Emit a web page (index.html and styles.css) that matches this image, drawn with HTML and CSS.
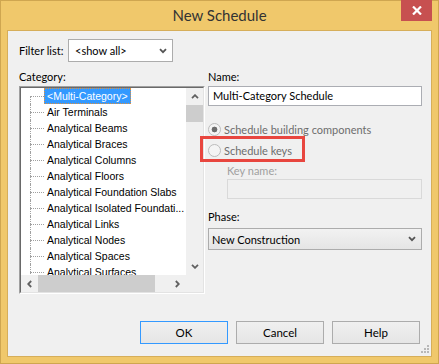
FILE: index.html
```html
<!DOCTYPE html>
<html lang="en">
<head>
    <meta charset="UTF-8">
    <title>New Schedule</title>
    <link rel="stylesheet" href="styles.css">
</head>
<body>
    <div class="window">
        <div class="titlebar">
            <span></span>
            <div class="title">New Schedule</div>
            <div class="close">
                <svg width="10" height="9" viewBox="0 0 10 9"><path d="M1 0.5 L9 8.5 M9 0.5 L1 8.5" stroke="#fff" stroke-width="2.2" fill="none"/></svg>
            </div>
        </div>

        <div class="client">
            <div class="filter-row">
                <label>Filter list:</label>
                <div class="combo combo-white">
                    <span>&lt;show all&gt;</span>
                    <svg class="chev" width="8" height="6" viewBox="0 0 8 6"><polyline points="1,1.2 4,4.2 7,1.2" stroke="#555" stroke-width="1.8" fill="none"/></svg>
                </div>
            </div>

            <div class="columns">
                <div class="col-left">
                    <div class="label">Category:</div>
                    <div class="tree">
                        <div class="tree-inner">
                            <div class="tree-view">
                                <ul>
                                    <li><span class="selected">&lt;Multi-Category&gt;</span></li>
                                    <li>Air Terminals</li>
                                    <li>Analytical Beams</li>
                                    <li>Analytical Braces</li>
                                    <li>Analytical Columns</li>
                                    <li>Analytical Floors</li>
                                    <li>Analytical Foundation Slabs</li>
                                    <li>Analytical Isolated Foundati...</li>
                                    <li>Analytical Links</li>
                                    <li>Analytical Nodes</li>
                                    <li>Analytical Spaces</li>
                                    <li>Analytical Surfaces</li>
                                </ul>
                            </div>
                            <div class="vscroll">
                                <div class="arrow"><svg width="8" height="5" viewBox="0 0 8 5"><polyline points="1,4.2 4,1.2 7,4.2" stroke="#606060" stroke-width="1.8" fill="none"/></svg></div>
                                <div class="thumb-v"></div>
                                <div class="track"></div>
                                <div class="arrow"><svg width="8" height="5" viewBox="0 0 8 5"><polyline points="1,0.8 4,3.8 7,0.8" stroke="#606060" stroke-width="1.8" fill="none"/></svg></div>
                            </div>
                            <div class="hscroll">
                                <div class="arrow"><svg width="5" height="8" viewBox="0 0 5 8"><polyline points="4.2,1 1.2,4 4.2,7" stroke="#606060" stroke-width="1.8" fill="none"/></svg></div>
                                <div class="thumb-h"></div>
                                <div class="track"></div>
                                <div class="arrow"><svg width="5" height="8" viewBox="0 0 5 8"><polyline points="0.8,1 3.8,4 0.8,7" stroke="#606060" stroke-width="1.8" fill="none"/></svg></div>
                            </div>
                            <div class="corner"></div>
                        </div>
                    </div>
                </div>

                <div class="col-right">
                    <div class="label">Name:</div>
                    <div class="textbox">Multi-Category Schedule</div>

                    <div class="radio radio-first">
                        <span class="radio-dot checked"></span>
                        <span>Schedule building components</span>
                    </div>
                    <div class="radio radio-second marked">
                        <span class="radio-dot"></span>
                        <span>Schedule keys</span>
                    </div>

                    <div class="key-label">Key name:</div>
                    <div class="textbox textbox-disabled"></div>

                    <div class="label phase-label">Phase:</div>
                    <div class="combo combo-gray">
                        <span>New Construction</span>
                        <svg class="chev" width="8" height="6" viewBox="0 0 8 6"><polyline points="1,1.2 4,4.2 7,1.2" stroke="#555" stroke-width="1.8" fill="none"/></svg>
                    </div>
                </div>
            </div>

            <div class="buttons">
                <button class="btn btn-default">OK</button>
                <button class="btn">Cancel</button>
                <button class="btn">Help</button>
            </div>

            <svg class="grip" width="9" height="9" viewBox="0 0 9 9">
                <rect x="6" y="0" width="2" height="2" fill="#b8b8b8"/>
                <rect x="3" y="3" width="2" height="2" fill="#b8b8b8"/>
                <rect x="6" y="3" width="2" height="2" fill="#b8b8b8"/>
                <rect x="0" y="6" width="2" height="2" fill="#b8b8b8"/>
                <rect x="3" y="6" width="2" height="2" fill="#b8b8b8"/>
                <rect x="6" y="6" width="2" height="2" fill="#b8b8b8"/>
            </svg>
        </div>
    </div>
</body>
</html>
```

FILE: styles.css
```css
body {
    margin: 0;
    background-color: #f0c86b;
    font-family: Lato, "Liberation Sans", sans-serif;
    font-size: 11px;
    color: #000;
    overflow: hidden;
}
.window {
    width: 439px;
    height: 364px;
    box-sizing: border-box;
    border: 1px solid #cfa650;
    display: flex;
    flex-direction: column;
}
.titlebar {
    height: 29px;
    display: grid;
    grid-template-columns: 1fr auto 1fr;
}
.title {
    align-self: center;
    font-size: 15px;
    color: #333;
    padding-bottom: 1px;
}
.close {
    justify-self: end;
    align-self: start;
    width: 31px;
    height: 21px;
    margin-top: -1px;
    margin-right: 6px;
    background-color: #c75050;
    display: flex;
    align-items: center;
    justify-content: center;
}
.client {
    position: relative;
    margin: 0 6px;
    height: 327px;
    box-sizing: border-box;
    border: 1px solid #d6ae5a;
    background-color: #f0f0f0;
    padding: 8px 9px 12px 11px;
    display: flex;
    flex-direction: column;
}
.filter-row {
    display: flex;
    align-items: center;
    height: 23px;
}
.filter-row label {
    width: 49px;
}
.combo {
    box-sizing: border-box;
    border: 1px solid #acacac;
    display: flex;
    align-items: center;
    justify-content: space-between;
}
.combo-white {
    width: 105px;
    height: 23px;
    background-color: #fff;
    padding: 0 5px 0 6px;
}
.combo-gray {
    height: 22px;
    background: linear-gradient(#f2f2f2, #e5e5e5);
    padding: 0 5px 0 3px;
}
.columns {
    display: grid;
    grid-template-columns: 186px 214px;
    column-gap: 3px;
}
.label {
    padding-top: 7px;
    line-height: 15px;
    margin-bottom: 2px;
}

/* category tree */
.tree {
    height: 208px;
    box-sizing: border-box;
    border: 1px solid;
    border-color: #a0a0a0 #fff #fff #a0a0a0;
}
.tree-inner {
    height: 100%;
    box-sizing: border-box;
    border: 1px solid;
    border-color: #696969 #e3e3e3 #e3e3e3 #696969;
    background-color: #fff;
    display: grid;
    grid-template-columns: 1fr 17px;
    grid-template-rows: 1fr 17px;
}
.tree-view {
    overflow: hidden;
}
.tree-view ul {
    list-style: none;
    margin: 0;
    padding: 0 0 0 9px;
}
.tree-view li {
    position: relative;
    height: 16px;
    line-height: 16px;
    padding-left: 17px;
    white-space: nowrap;
    font-family: "Liberation Sans", Arial, sans-serif;
    font-size: 10.5px;
}
.tree-view li::before {
    content: "";
    position: absolute;
    left: 0;
    top: 0;
    bottom: 0;
    border-left: 1px dotted #a0a0a0;
}
.tree-view li:first-child::before {
    top: 8px;
}
.tree-view li::after {
    content: "";
    position: absolute;
    left: 0;
    top: 8px;
    width: 14px;
    border-top: 1px dotted #a0a0a0;
}
.selected {
    display: inline-block;
    vertical-align: top;
    margin-left: -3px;
    padding: 0 2px;
    line-height: 14px;
    border: 1px dotted #e0903c;
    background-color: #3399ff;
    color: #fff;
}
.vscroll {
    background-color: #f0f0f0;
    display: flex;
    flex-direction: column;
}
.hscroll {
    background-color: #f0f0f0;
    display: flex;
}
.arrow {
    width: 17px;
    height: 17px;
    flex: none;
    display: flex;
    align-items: center;
    justify-content: center;
}
.thumb-v {
    height: 17px;
    background-color: #cdcdcd;
}
.thumb-h {
    width: 117px;
    background-color: #cdcdcd;
}
.track {
    flex: 1;
}
.corner {
    background-color: #f0f0f0;
}

/* right column */
.textbox {
    height: 20px;
    box-sizing: border-box;
    border: 1px solid #abadb3;
    background-color: #fff;
    padding-left: 4px;
    line-height: 18px;
}
.textbox-disabled {
    margin-left: 19px;
    margin-top: 1px;
    background-color: #f0f0f0;
    border-color: #d9d9d9;
}
.radio {
    display: flex;
    align-items: center;
    gap: 3px;
    height: 16px;
    color: #6d6d6d;
}
.radio-first {
    margin-top: 15px;
}
.radio-second {
    margin-top: 5px;
}
.radio-dot {
    width: 13px;
    height: 13px;
    box-sizing: border-box;
    border: 1px solid #bcbcbc;
    border-radius: 50%;
    background-color: #f4f4f4;
}
.radio-dot.checked {
    background: radial-gradient(circle, #6d6d6d 0 2.6px, #f4f4f4 3.2px);
}
.marked {
    position: relative;
}
.marked::after {
    content: "";
    position: absolute;
    left: -8px;
    top: -6px;
    width: 105px;
    height: 26px;
    box-sizing: border-box;
    border: 3px solid #e8463f;
}
.key-label {
    margin-top: 5px;
    padding-left: 19px;
    line-height: 15px;
    color: #a0a0a0;
}
.phase-label {
    padding-top: 10px;
    margin-bottom: 4px;
}
.chev {
    flex: none;
}

/* buttons */
.buttons {
    margin-top: auto;
    display: flex;
    justify-content: flex-end;
    gap: 8px;
    padding-right: 2px;
}
.btn {
    width: 88px;
    height: 23px;
    box-sizing: border-box;
    border: 1px solid #acacac;
    background: linear-gradient(#f0f0f0, #e5e5e5);
    font-family: inherit;
    font-size: 11.5px;
    color: #000;
    padding: 0;
}
.btn-default {
    border-color: #3399ff;
}
.grip {
    position: absolute;
    right: 1px;
    bottom: 2px;
}
```
